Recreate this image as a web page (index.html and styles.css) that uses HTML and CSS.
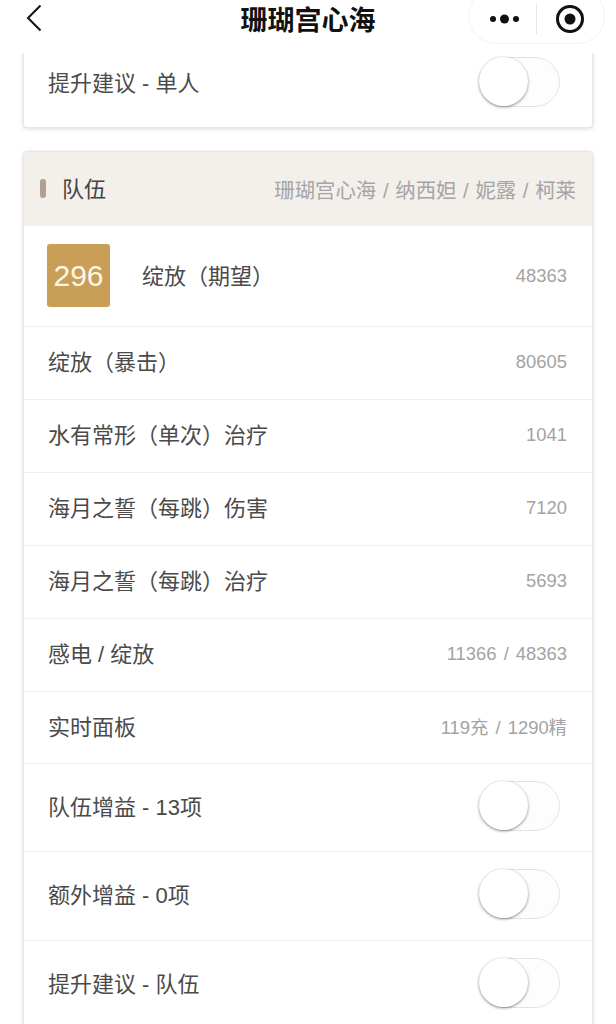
FILE: index.html
```html
<!DOCTYPE html>
<html lang="zh">
<head>
<meta charset="utf-8">
<title>珊瑚宫心海</title>
<link rel="stylesheet" href="styles.css">
</head>
<body>
<div class="page">
  <header class="nav">
    <svg class="back" width="18" height="28" viewBox="0 0 18 28"><path d="M15.5 1.5 3 14l12.5 12.5" fill="none" stroke="#111" stroke-width="2"/></svg>
    <h1 class="title">珊瑚宫心海</h1>
    <div class="capsule">
      <svg width="32" height="10" viewBox="0 0 32 10"><circle cx="4" cy="5" r="3" fill="#111"/><circle cx="15.5" cy="5" r="4.5" fill="#111"/><circle cx="27" cy="5" r="3" fill="#111"/></svg>
      <span class="capsule-sep"></span>
      <svg width="30" height="30" viewBox="0 0 30 30"><circle cx="15" cy="15" r="12.5" fill="none" stroke="#111" stroke-width="3"/><circle cx="15" cy="15" r="5.5" fill="#111"/></svg>
    </div>
  </header>
  <main class="content">
    <section class="card card-cut">
      <div class="row row-switch first-row"><span class="label">提升建议 - 单人</span><span class="switch"></span></div>
    </section>
    <section class="card">
      <div class="card-head">
        <span class="mark"></span><span class="head-title">队伍</span>
        <span class="head-note">珊瑚宫心海 / 纳西妲 / 妮露 / 柯莱</span>
      </div>
      <div class="row row-top"><span class="badge">296</span><span class="label">绽放（期望）</span><span class="value">48363</span></div>
      <div class="row"><span class="label">绽放（暴击）</span><span class="value">80605</span></div>
      <div class="row"><span class="label">水有常形（单次）治疗</span><span class="value">1041</span></div>
      <div class="row"><span class="label">海月之誓（每跳）伤害</span><span class="value">7120</span></div>
      <div class="row"><span class="label">海月之誓（每跳）治疗</span><span class="value">5693</span></div>
      <div class="row"><span class="label">感电 / 绽放</span><span class="value">11366 / 48363</span></div>
      <div class="row row-short"><span class="label">实时面板</span><span class="value">119充 / 1290精</span></div>
      <div class="row row-switch"><span class="label">队伍增益 - 13项</span><span class="switch"></span></div>
      <div class="row row-switch row-tall"><span class="label">额外增益 - 0项</span><span class="switch"></span></div>
      <div class="row row-switch"><span class="label">提升建议 - 队伍</span><span class="switch"></span></div>
    </section>
  </main>
</div>
</body>
</html>
```
FILE: styles.css
```css
html, body {
  margin: 0;
  padding: 0;
  background: #fff;
  height: 1024px;
  overflow: hidden;
}
.page {
  width: 616px;
  height: 1024px;
  overflow: hidden;
  font-family: "Liberation Sans", "Noto Sans CJK SC", sans-serif;
  color: #444;
}
.nav {
  height: 53px;
  position: relative;
  display: flex;
  align-items: center;
  justify-content: center;
  background: #fff;
}
.back {
  position: absolute;
  left: 25px;
  top: 4px;
}
.title {
  margin: 0 0 15px;
  font-size: 27px;
  line-height: 34px;
  font-weight: 700;
  color: #111;
  font-family: "Noto Sans CJK SC", sans-serif;
}
.capsule {
  position: absolute;
  left: 468px;
  top: -12px;
  width: 137px;
  height: 56px;
  box-sizing: border-box;
  border: 1px solid #f2f2f2;
  border-radius: 28px;
  display: flex;
  align-items: center;
  padding: 6px 19px 0 20px;
  justify-content: space-between;
}
.capsule-sep {
  width: 1px;
  height: 30px;
  background: #e6e6e6;
  margin-right: 3px;
}
.content {
  padding: 0 23px;
}
.card {
  background: #fff;
  border-radius: 4px;
  border: 1px solid #e6e6e6;
  box-shadow: 0 1px 4px rgba(0, 0, 0, .14);
  margin-bottom: 24px;
}
.card-cut {
  border-top: 0;
  border-radius: 0 0 4px 4px;
  margin-bottom: 23px;
}
.card-head {
  height: 73px;
  background: #f3efeb;
  display: flex;
  align-items: center;
  padding: 0 16px;
  border-bottom: 1px solid #f0f0f0;
}
.mark {
  width: 6px;
  height: 19px;
  border-radius: 3px;
  background: #b39e92;
}
.head-title {
  margin-left: 16px;
  font-size: 22px;
  padding-bottom: 3px;
  color: #444;
}
.head-note {
  margin-left: auto;
  font-size: 20.4px;
  word-spacing: 1px;
  color: #a5a5a5;
}
.row {
  box-sizing: border-box;
  height: 73px;
  display: flex;
  align-items: center;
  justify-content: space-between;
  padding: 0 25px 4px 24px;
  border-bottom: 1px solid #efefef;
}
.row:last-child {
  border-bottom: 0;
}
.row-top {
  height: 101px;
  padding-bottom: 1px;
  justify-content: flex-start;
}
.row-short {
  height: 72px;
}
.row-switch {
  height: 88px;
  padding-right: 32px;
}
.row-tall {
  height: 89px;
}
.first-row {
  height: 74px;
  padding-bottom: 16px;
  border-bottom: 0;
}
.badge {
  width: 63px;
  height: 63px;
  margin-left: -1px;
  border-radius: 3px;
  background: #c99f57;
  color: #fdf6e8;
  font-size: 30px;
  display: flex;
  align-items: center;
  justify-content: center;
  margin-right: 32px;
}
.label {
  font-size: 22px;
  padding-bottom: 2px;
  color: #4a4a4a;
}
.row-top .label {
  padding-bottom: 4px;
}
.value {
  margin-left: auto;
  font-size: 18.4px;
  word-spacing: 2px;
  padding-top: 1px;
  color: #a3a3a3;
}
.switch {
  width: 81px;
  height: 50px;
  box-sizing: border-box;
  border: 1px solid #e3e3e3;
  border-radius: 25px;
  background: #fdfdfd;
  position: relative;
}
.switch::before {
  content: "";
  position: absolute;
  left: -1px;
  top: -1px;
  width: 49px;
  height: 49px;
  border-radius: 50%;
  background: #fff;
  box-shadow: 0 1px 3px rgba(0, 0, 0, .45);
}
```
